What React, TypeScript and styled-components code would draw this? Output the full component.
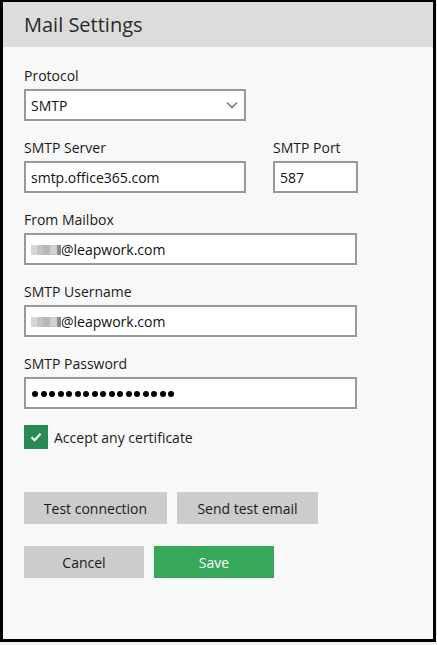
import styled, { createGlobalStyle } from 'styled-components';

const GlobalStyle = createGlobalStyle`
  html, body {
    margin: 0;
    padding: 0;
    background: #f0f0f0;
  }
  * {
    box-sizing: border-box;
  }
`;

function Chevron() {
  return (
    <svg width="12" height="8" viewBox="0 0 12 8">
      <path d="M1 1.5 L6 6.5 L11 1.5" fill="none" stroke="#7a7a7a" strokeWidth="1.6" />
    </svg>
  );
}

function Check() {
  return (
    <svg width="12" height="10" viewBox="0 0 12 10">
      <path d="M1.5 5.2 L4.6 8.2 L10.5 1.8" fill="none" stroke="#fff" strokeWidth="2.2" />
    </svg>
  );
}

function Blurred() {
  return (
    <BlurWrap>
      <BlurBlock $w={6} $c="#d6d6d6" />
      <BlurBlock $w={6} $c="#c4c4c4" />
      <BlurBlock $w={7} $c="#b6b6b6" />
      <BlurBlock $w={7} $c="#cfcfcf" />
      <BlurBlock $w={4} $c="#8c8c8c" />
    </BlurWrap>
  );
}

function App() {
  return (
    <>
      <GlobalStyle />
      <Panel>
        <Header>
          <Title>Mail Settings</Title>
        </Header>
        <Body>
          <Field>
            <Label>Protocol</Label>
            <Select $width={222}>
              <span>SMTP</span>
              <Chevron />
            </Select>
          </Field>

          <FieldRow>
            <Field>
              <Label>SMTP Server</Label>
              <Input $width={222}>smtp.office365.com</Input>
            </Field>
            <Field>
              <Label>SMTP Port</Label>
              <Input $width={85}>587</Input>
            </Field>
          </FieldRow>

          <Field>
            <Label>From Mailbox</Label>
            <Input $width={333}>
              <Blurred />@leapwork.com
            </Input>
          </Field>

          <Field>
            <Label>SMTP Username</Label>
            <Input $width={333}>
              <Blurred />@leapwork.com
            </Input>
          </Field>

          <Field>
            <Label>SMTP Password</Label>
            <Input $width={333}>
              <Dots aria-label="password">
                {Array.from({ length: 17 }, (_, i) => (
                  <Dot key={i} />
                ))}
              </Dots>
            </Input>
          </Field>

          <CheckRow>
            <CheckBox>
              <Check />
            </CheckBox>
            <CheckLabel>Accept any certificate</CheckLabel>
          </CheckRow>

          <ButtonRow>
            <Button $width={143}>Test connection</Button>
            <Button $width={141}>Send test email</Button>
          </ButtonRow>
          <ButtonRow $gap={22}>
            <Button $width={120}>Cancel</Button>
            <Button $width={120} $primary>
              Save
            </Button>
          </ButtonRow>
        </Body>
      </Panel>
    </>
  );
}

const Panel = styled.div`
  width: 436px;
  height: 642px;
  border: 3px solid #000;
  border-top-width: 2px;
  background: #f8f8f8;
  display: flex;
  flex-direction: column;
  font-family: 'Open Sans', 'Noto Sans', sans-serif;
  color: #1a1a1a;
`;

const Header = styled.div`
  height: 45px;
  background: #dcdcdc;
  display: flex;
  align-items: center;
  padding-left: 21px;
`;

const Title = styled.h1`
  margin: 0;
  font-size: 20px;
  font-weight: 400;
  color: #2a2a2a;
`;

const Body = styled.div`
  padding: 19px 0 0 21px;
  display: flex;
  flex-direction: column;
`;

const Field = styled.div`
  display: flex;
  flex-direction: column;
  margin-bottom: 17px;
`;

const FieldRow = styled.div`
  display: flex;
  gap: 27px;
`;

const Label = styled.label`
  font-size: 14px;
  line-height: 20px;
  margin-bottom: 3px;
  color: #1a1a1a;
`;

const Input = styled.div<{ $width: number }>`
  width: ${({ $width }) => $width}px;
  height: 32px;
  border: 2px solid #999;
  background: #fff;
  display: flex;
  align-items: center;
  padding-left: 5px;
  font-size: 14px;
  color: #111;
`;

const Select = styled(Input)`
  justify-content: space-between;
  padding-right: 6px;
`;

const BlurWrap = styled.span`
  display: inline-flex;
  height: 10px;
  margin-top: 2px;
`;

const BlurBlock = styled.span<{ $w: number; $c: string }>`
  width: ${({ $w }) => $w}px;
  height: 100%;
  background: ${({ $c }) => $c};
`;

const Dots = styled.span`
  display: flex;
  gap: 2.5px;
  padding-left: 1px;
  margin-top: 1px;
`;

const Dot = styled.span`
  width: 6px;
  height: 6px;
  border-radius: 50%;
  background: #000;
`;

const CheckRow = styled.div`
  display: flex;
  align-items: center;
  gap: 6px;
  margin-top: -1px;
`;

const CheckBox = styled.div`
  width: 24px;
  height: 24px;
  background: #2a8a55;
  display: flex;
  align-items: center;
  justify-content: center;
`;

const CheckLabel = styled.span`
  font-size: 14px;
  color: #1a1a1a;
`;

const ButtonRow = styled.div<{ $gap?: number }>`
  display: flex;
  gap: 10px;
  margin-top: ${({ $gap }) => $gap ?? 43}px;
`;

const Button = styled.button<{ $width: number; $primary?: boolean }>`
  width: ${({ $width }) => $width}px;
  height: 32px;
  border: none;
  background: ${({ $primary }) => ($primary ? '#37a75a' : '#cccccc')};
  color: ${({ $primary }) => ($primary ? '#fff' : '#1a1a1a')};
  font-family: inherit;
  font-size: 14px;
  padding: 0;
`;

export default App;
